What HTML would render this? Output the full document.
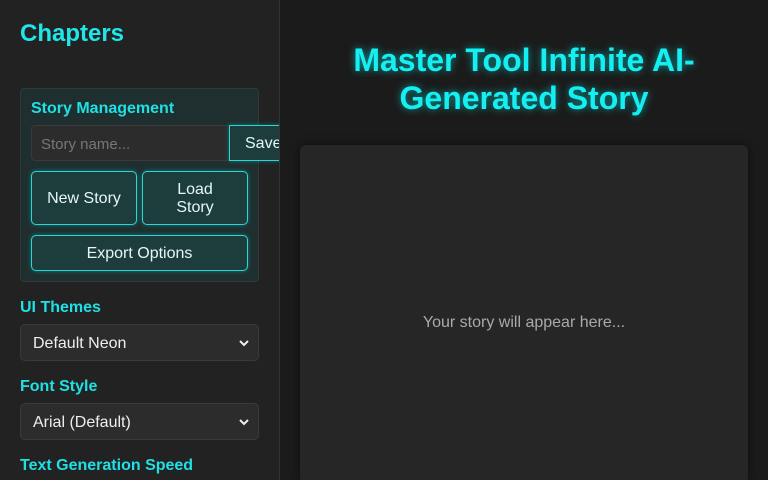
<!DOCTYPE html>
<html><head><meta charset="utf-8"><style>
*{box-sizing:border-box;margin:0;padding:0}
html{overflow:hidden;width:768px;height:480px}
body{width:768px;height:480px;overflow:hidden;background:#1b1b1b;font-family:"Liberation Sans",Arial,sans-serif;position:relative}
.side{position:absolute;left:0;top:0;width:280px;height:480px;background:#222;border-right:1px solid #333;overflow:hidden}
h2{position:absolute;left:20px;top:20px;color:#1fe6ea;font-size:24px;font-weight:bold}
.box{position:absolute;left:20px;top:88px;width:239px;height:194px;background:#1f2f2f;border:1px solid #2e3b3b;border-radius:4px}
.lbl{position:absolute;color:#1fe0e4;font-size:16px;font-weight:bold}
.inp{position:absolute;left:31px;top:125px;width:200px;height:36px;background:#2c2c2c;border:1px solid #3a3a3a;border-radius:4px;color:#777;font-size:15px;padding:10px 9px 0}
.btn{position:absolute;border:1px solid #2ad6d6;border-radius:5px;background:#1d3d3d;color:#e6f6f6;font-size:16px;text-align:center;display:flex;align-items:center;justify-content:center;box-shadow:0 0 4px rgba(0,255,255,.35);line-height:18px;padding-top:2px}
.sel{position:absolute;left:20px;width:239px;height:37px;background:#2c2c2c;border:1px solid #3a3a3a;border-radius:5px;color:#eee;font-size:16px;padding:10px 12px 0}
.sel svg{position:absolute;right:9px;top:15px}
.title{position:absolute;left:300px;width:448px;top:41px;text-align:center;color:#14f0f2;font-size:32px;font-weight:bold;line-height:38px;text-shadow:0 0 8px rgba(0,255,255,.55)}
.panel{position:absolute;left:300px;top:145px;width:448px;height:335px;background:#262626;border-radius:6px 6px 0 0;box-shadow:0 0 10px rgba(0,0,0,.5)}
.ph{position:absolute;left:0;right:0;top:169px;text-align:center;color:#aaa;font-size:16px}
</style></head><body>
<div class="side">
<h2>Chapters</h2>
<div class="box"></div>
<div class="lbl" style="left:31px;top:100px">Story Management</div>
<div class="inp">Story name...</div>
<div class="btn" style="left:229px;top:125px;width:70px;height:36px;border-radius:0;justify-content:flex-start;padding-left:15px">Save</div>
<div class="btn" style="left:31px;top:171px;width:106px;height:54px">New Story</div>
<div class="btn" style="left:142px;top:171px;width:106px;height:54px">Load<br>Story</div>
<div class="btn" style="left:31px;top:235px;width:217px;height:36px">Export Options</div>
<div class="lbl" style="left:20px;top:299px">UI Themes</div>
<div class="sel" style="top:324px">Default Neon<svg width="10" height="7" viewBox="0 0 10 7"><path d="M1 1l4 4 4-4" stroke="#eee" stroke-width="2" fill="none"/></svg></div>
<div class="lbl" style="left:20px;top:378px">Font Style</div>
<div class="sel" style="top:403px">Arial (Default)<svg width="10" height="7" viewBox="0 0 10 7"><path d="M1 1l4 4 4-4" stroke="#eee" stroke-width="2" fill="none"/></svg></div>
<div class="lbl" style="left:20px;top:457px">Text Generation Speed</div>
</div>
<div class="title">Master Tool Infinite AI-<br>Generated Story</div>
<div class="panel"><div class="ph">Your story will appear here...</div></div>
</body></html>
